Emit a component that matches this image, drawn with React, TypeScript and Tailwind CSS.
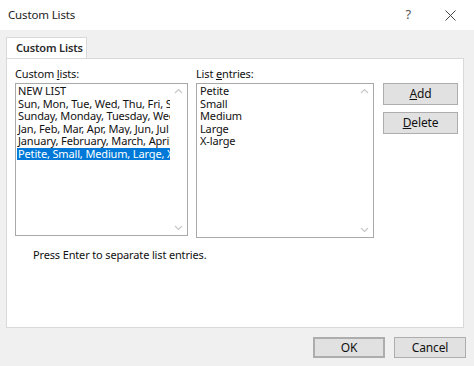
import React from "react";

const lists = [
  "NEW LIST",
  "Sun, Mon, Tue, Wed, Thu, Fri, Sat",
  "Sunday, Monday, Tuesday, Wednesday",
  "Jan, Feb, Mar, Apr, May, Jun, Jul",
  "January, February, March, April",
  "Petite, Small, Medium, Large, X-large",
];

const entries = ["Petite", "Small", "Medium", "Large", "X-large"];

const font = { fontFamily: '"Noto Sans", "Open Sans", sans-serif' };

const ScrollBar: React.FC = () => (
  <div className="w-[17px] flex flex-col justify-between items-center py-[4px] text-[#c8c8c8]">
    <svg width="9" height="6" viewBox="0 0 9 6">
      <path d="M1 5 L4.5 1.5 L8 5" fill="none" stroke="currentColor" strokeWidth="1.2" />
    </svg>
    <svg width="9" height="6" viewBox="0 0 9 6">
      <path d="M1 1 L4.5 4.5 L8 1" fill="none" stroke="currentColor" strokeWidth="1.2" />
    </svg>
  </div>
);

const Btn: React.FC<{ children: React.ReactNode; className?: string }> = ({
  children,
  className = "",
}) => (
  <div
    className={`flex items-center justify-center bg-[#e1e1e1] border border-[#adadad] text-[12px] text-[#111] ${className}`}
  >
    {children}
  </div>
);

export default function App() {
  return (
    <div
      className="w-[474px] h-[366px] bg-[#f0f0f0] flex flex-col overflow-hidden text-[#111] tracking-[-0.15px]"
      style={font}
    >
      <div className="h-[30px] bg-white flex items-center pl-[8px] pr-[16px] shrink-0">
        <span className="text-[11.5px] text-[#222]">Custom Lists</span>
        <span className="ml-auto text-[13px] text-[#555] mr-[34px]">?</span>
        <svg width="11" height="11" viewBox="0 0 11 11" className="mr-[2px]">
          <path d="M0.5 0.5 L10.5 10.5 M10.5 0.5 L0.5 10.5" stroke="#444" strokeWidth="1" />
        </svg>
      </div>

      <div className="pl-[6px] pr-[10px] pt-[7px] flex flex-col">
        <div className="flex">
          <div className="h-[22px] w-[81px] bg-white border border-[#d9d9d9] border-b-0 flex items-center pl-[9px] text-[11px] font-semibold text-[#2a2a2a] whitespace-nowrap">
            Custom Lists
          </div>
        </div>
        <div className="h-[270px] bg-white border border-[#d9d9d9] -mt-px flex flex-col pl-[8px] pt-[8px]">
          <div className="flex">
            <div className="flex flex-col w-[173px]">
              <div className="text-[11px] leading-[14px] h-[16px]">
                Custom <span className="underline">l</span>ists:
              </div>
              <div className="h-[153px] border border-[#a9a9a9] flex">
                <div className="flex-1 min-w-0 flex flex-col pt-[1px] pl-[1px] text-[11px] leading-[12.5px]">
                  {lists.map((l, i) => (
                    <div
                      key={l}
                      className={`whitespace-nowrap overflow-hidden pl-[1px] ${
                        i === lists.length - 1 ? "bg-[#0078d7] text-white" : ""
                      }`}
                    >
                      {l}
                    </div>
                  ))}
                </div>
                <ScrollBar />
              </div>
            </div>

            <div className="flex flex-col w-[178px] ml-[8px]">
              <div className="text-[11px] leading-[14px] h-[16px]">
                List <span className="underline">e</span>ntries:
              </div>
              <div className="h-[155px] border border-[#a9a9a9] flex">
                <div className="flex-1 flex flex-col pt-[1px] pl-[3px] text-[11px] leading-[12.5px]">
                  {entries.map((e) => (
                    <div key={e}>{e}</div>
                  ))}
                </div>
                <ScrollBar />
              </div>
            </div>

            <div className="flex flex-col gap-[7px] ml-[9px] pt-[16px]">
              <Btn className="w-[75px] h-[22px]">
                <span>
                  <span className="underline">A</span>dd
                </span>
              </Btn>
              <Btn className="w-[75px] h-[22px]">
                <span>
                  <span className="underline">D</span>elete
                </span>
              </Btn>
            </div>
          </div>
          <div className="text-[11px] mt-[9px] pl-[18px]">Press Enter to separate list entries.</div>
        </div>

        <div className="flex justify-end gap-[9px] mt-[9px] pr-0 -mr-[2px]">
          <Btn className="w-[72px] h-[21px] border-2 border-[#0078d7]">OK</Btn>
          <Btn className="w-[72px] h-[21px]">Cancel</Btn>
        </div>
      </div>
    </div>
  );
}
